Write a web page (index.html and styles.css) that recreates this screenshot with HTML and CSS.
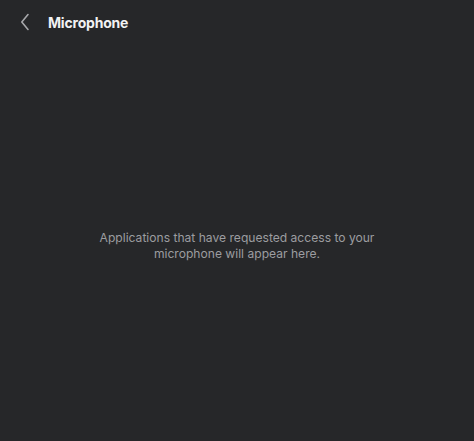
FILE: index.html
```html
<!DOCTYPE html>
<html lang="en">
<head>
    <meta charset="UTF-8">
    <meta name="viewport" content="width=device-width, initial-scale=1.0">
    <title>Microphone</title>
    <link rel="stylesheet" href="styles.css">
</head>
<body>

<div class="panel">
    <div class="panel-header">
        <button class="back-btn" aria-label="Back">
            <svg width="10" height="18" viewBox="0 0 10 18">
                <path d="M8 1.5 L1.8 9 L8 16.5" fill="none" stroke="#a7a8ab" stroke-width="1.6" stroke-linecap="round" stroke-linejoin="round"/>
            </svg>
        </button>
        <h1>Microphone</h1>
    </div>

    <div class="panel-empty">
        <p>Applications that have requested access to your<br>microphone will appear here.</p>
    </div>
</div>

</body>
</html>
```

FILE: styles.css
```css
html, body {
    margin: 0;
    height: 100%;
}
body {
    font-family: Inter, 'Liberation Sans', Arial, sans-serif;
    background-color: #262729;
}
.panel {
    height: 100%;
    display: flex;
    flex-direction: column;
    background-color: #262729;
}
.panel-header {
    display: flex;
    align-items: center;
    height: 44px;
    padding-left: 20px;
}
.back-btn {
    background: none;
    border: 0;
    padding: 0;
    width: 28px;
    display: flex;
    align-items: center;
    cursor: pointer;
}
.panel-header h1 {
    margin: 0;
    font-size: 14px;
    font-weight: 700;
    color: #f2f2f3;
    letter-spacing: -0.2px;
}
.panel-empty {
    display: flex;
    justify-content: center;
    padding-top: 186px;
}
.panel-empty p {
    margin: 0;
    text-align: center;
    font-size: 12.1px;
    line-height: 16px;
    color: #9c9da0;
}
```
